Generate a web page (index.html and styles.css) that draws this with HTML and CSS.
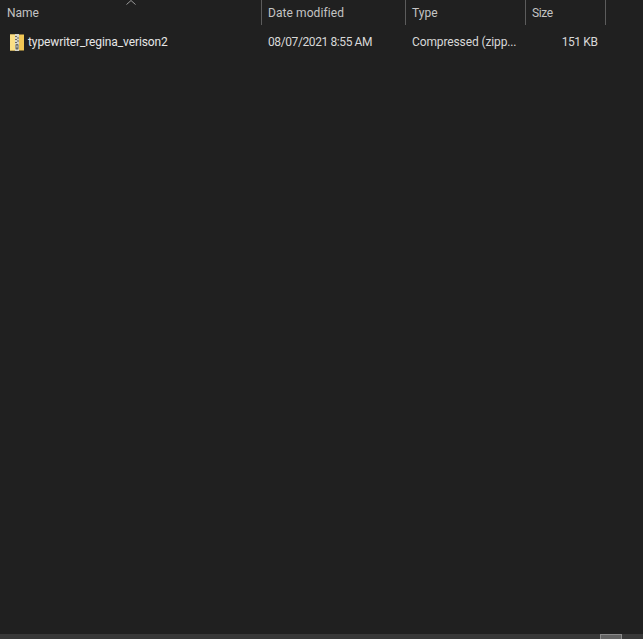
FILE: index.html
```html
<!DOCTYPE html>
<html lang="en">
<head>
<meta charset="utf-8">
<title>Explorer</title>
<link rel="stylesheet" href="styles.css">
</head>
<body>
<main class="window">
  <header class="columns header">
    <div class="head-cell name-head">Name<svg class="sort" width="10" height="5" viewBox="0 0 10 5"><path d="M0.5 4.5 L5 0.5 L9.5 4.5" fill="none" stroke="#9a9a9a" stroke-width="1"/></svg></div>
    <div class="head-cell date-head">Date modified</div>
    <div class="head-cell">Type</div>
    <div class="head-cell size-head">Size</div>
  </header>
  <section class="columns row">
    <div class="cell name-cell">
      <svg class="zip" width="14" height="17" viewBox="0 0 14 17">
        <rect x="0" y="0.500" width="14" height="16" fill="#f0c654"/>
        <rect x="0" y="0.500" width="5" height="16" fill="#fbdf85"/>
        <rect x="5" y="0" width="4" height="17" fill="#d5d5cc"/>
        <path d="M5 2h2v1H5zM7 3.500h2v1H7zM5 5h2v1H5zM7 6.500h2v1H7zM5 8h2v1H5z" fill="#6e6a60"/>
        <rect x="5.500" y="10" width="3" height="5.500" rx="1" fill="#68685f"/>
        <rect x="6.500" y="11.500" width="1" height="2" fill="#e6e6e0"/>
      </svg>
      <span>typewriter_regina_verison2</span>
    </div>
    <div class="cell date-cell">08/07/2021 8:55 AM</div>
    <div class="cell type-cell">Compressed (zipp...</div>
    <div class="cell size-cell">151 KB</div>
  </section>
  <div class="scrollbar"><div class="thumb"></div></div>
</main>
</body>
</html>
```
FILE: styles.css
```css
* { box-sizing: border-box; }
html, body { margin: 0; height: 100%; }
body {
  background: #202020;
  color: #dcdcdc;
  font-family: Roboto, "Open Sans", sans-serif;
  font-size: 12px;
  overflow: hidden;
}
.window {
  display: flex;
  flex-direction: column;
  height: 100vh;
}
.columns {
  display: grid;
  grid-template-columns: 262px 144px 120px 80px;
}
.header { height: 25px; }
.head-cell {
  position: relative;
  padding: 5px 0 0 6px;
  line-height: 16px;
  color: #c4c4c4;
  border-right: 1px solid #5c5c5c;
}
.head-cell:first-child { padding-left: 7px; }
.date-head { letter-spacing: 0.08px; }
.size-head { letter-spacing: -0.4px; }
.sort {
  position: absolute;
  left: 126px;
  top: 0;
}
.row {
  height: 22px;
  margin-top: 6px;
  align-items: center;
}
.cell {
  padding-left: 6px;
  line-height: 16px;
  color: #d8d8d8;
  white-space: nowrap;
}
.name-cell {
  display: flex;
  align-items: center;
  gap: 4px;
  padding-left: 10px;
  color: #e6e6e6;
  letter-spacing: -0.11px;
}
.date-cell { letter-spacing: -0.4px; }
.type-cell { letter-spacing: -0.12px; }
.size-cell {
  padding: 0 8.5px 0 0;
  text-align: right;
  letter-spacing: -0.4px;
}
.scrollbar {
  margin-top: auto;
  height: 5px;
  background: #383838;
  padding-left: 600px;
}
.thumb {
  width: 22px;
  height: 5px;
  background: #636363;
  border: 1px solid #8a8a8a;
  border-bottom: 0;
}
```
